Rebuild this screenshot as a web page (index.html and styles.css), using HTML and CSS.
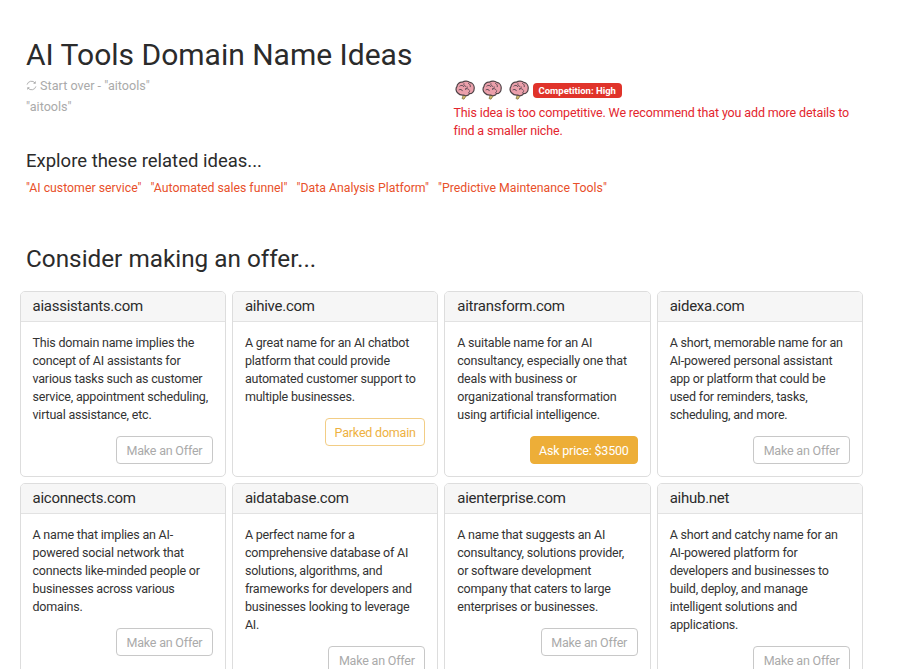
FILE: index.html
```html
<!DOCTYPE html>
<html lang="en">
<head>
<meta charset="UTF-8">
<meta name="viewport" content="width=device-width, initial-scale=1.0">
<title>AI Tools Domain Name Ideas</title>
<link rel="stylesheet" href="styles.css">
</head>
<body>

<svg class="defs" width="0" height="0" aria-hidden="true">
    <symbol id="brain" viewBox="0 0 20 20">
        <path d="M8.500 14.500L7 18.500l2 .7 3-4.700z" fill="#d3bb6c" stroke="#857544" stroke-width=".8"/>
        <path d="M2.800 13C.7 11.300.6 8.300 1.900 6.700 2.100 3.700 4.800 1.900 7.300 2.200 9.500.7 13 .8 14.800 2.400 17.600 3 19.500 5.600 19.200 8.500 19.200 11.700 17 13.800 14.500 13.700 13.300 15.800 10.400 16.300 8.800 15.100 6.700 15.400 4.300 14.800 2.800 13z" fill="#eba0ab" stroke="#4f4347" stroke-width="1.200"/>
        <path d="M4.500 6.300c1.600-1.600 3.800-1 4.300.6M9 3.300c-.6 1.600.5 3.200 2.200 3.100M13.200 3.300c1.500.6 2.600 2.200 2 3.800M3.700 10c1.600-1.100 3.300-.6 3.800 1.100M10 9.200c1.600-1 3.700-.5 4.200 1.100M12.300 6.600c0 1.600-1 2.600-2.300 2.600M14.700 10.500c0 1.100-.6 2.200-1.700 2.700" fill="none" stroke="#65505a" stroke-width="1"/>
    </symbol>
</svg>

<div id="page">
    <h1>AI Tools Domain Name Ideas</h1>

    <div class="intro">
        <div class="intro-left">
            <a class="muted" href="#">
                <svg class="refresh" viewBox="0 0 12 12" width="11" height="11">
                    <path d="M1.200 5A4.900 4.900 0 0 1 9.800 3.200M10.800 7A4.900 4.900 0 0 1 2.200 8.800" fill="none" stroke="#aaa" stroke-width="1"/>
                    <path d="M10.600 1v3H7.800zM1.400 11V8h2.800z" fill="#aaa"/>
                </svg>
                Start over - "aitools"
            </a>
            <p class="muted keyword">"aitools"</p>
        </div>
        <div class="intro-right">
            <div class="competition">
                <svg class="brain"><use href="#brain"/></svg>
                <svg class="brain"><use href="#brain"/></svg>
                <svg class="brain"><use href="#brain"/></svg>
                <span class="badge">Competition: High</span>
            </div>
            <p class="warning">This idea is too competitive. We recommend that you add more details to find a smaller niche.</p>
        </div>
    </div>

    <h3>Explore these related ideas...</h3>
    <div class="related">
        <a href="#">"AI customer service"</a>
        <a href="#">"Automated sales funnel"</a>
        <a href="#">"Data Analysis Platform"</a>
        <a href="#">"Predictive Maintenance Tools"</a>
    </div>

    <h2>Consider making an offer...</h2>

    <div class="cards">
        <div class="card">
            <div class="card-header">aiassistants.com</div>
            <div class="card-body">
                <p>This domain name implies the concept of AI assistants for various tasks such as customer service, appointment scheduling, virtual assistance, etc.</p>
                <a class="btn btn-offer" href="#">Make an Offer</a>
            </div>
        </div>
        <div class="card">
            <div class="card-header">aihive.com</div>
            <div class="card-body">
                <p>A great name for an AI chatbot platform that could provide automated customer support to multiple businesses.</p>
                <a class="btn btn-parked" href="#">Parked domain</a>
            </div>
        </div>
        <div class="card">
            <div class="card-header">aitransform.com</div>
            <div class="card-body">
                <p>A suitable name for an AI consultancy, especially one that deals with business or organizational transformation using artificial intelligence.</p>
                <a class="btn btn-price" href="#">Ask price: $3500</a>
            </div>
        </div>
        <div class="card">
            <div class="card-header">aidexa.com</div>
            <div class="card-body">
                <p>A short, memorable name for an AI-powered personal assistant app or platform that could be used for reminders, tasks, scheduling, and more.</p>
                <a class="btn btn-offer" href="#">Make an Offer</a>
            </div>
        </div>
        <div class="card">
            <div class="card-header">aiconnects.com</div>
            <div class="card-body">
                <p>A name that implies an AI-powered social network that connects like-minded people or businesses across various domains.</p>
                <a class="btn btn-offer" href="#">Make an Offer</a>
            </div>
        </div>
        <div class="card">
            <div class="card-header">aidatabase.com</div>
            <div class="card-body">
                <p>A perfect name for a comprehensive database of AI solutions, algorithms, and frameworks for developers and businesses looking to leverage AI.</p>
                <a class="btn btn-offer" href="#">Make an Offer</a>
            </div>
        </div>
        <div class="card">
            <div class="card-header">aienterprise.com</div>
            <div class="card-body">
                <p>A name that suggests an AI consultancy, solutions provider, or software development company that caters to large enterprises or businesses.</p>
                <a class="btn btn-offer" href="#">Make an Offer</a>
            </div>
        </div>
        <div class="card">
            <div class="card-header">aihub.net</div>
            <div class="card-body">
                <p>A short and catchy name for an AI-powered platform for developers and businesses to build, deploy, and manage intelligent solutions and applications.</p>
                <a class="btn btn-offer" href="#">Make an Offer</a>
            </div>
        </div>
    </div>
</div>

</body>
</html>
```

FILE: styles.css
```css
html, body {
    height: 100%;
    overflow: hidden;
}
body {
    font-family: Roboto, 'Noto Sans', sans-serif;
    background-color: #ffffff;
    color: #333333;
    margin: 0;
    padding: 0;
    font-size: 12.5px;
    letter-spacing: -0.2px;
    line-height: 18px;
}
a {
    text-decoration: none;
}
p {
    margin: 0;
}
.defs {
    position: absolute;
}
#page {
    width: 843.5px;
    padding: 36px 0 0 19.5px;
}
h1, h2, h3 {
    font-weight: 400;
    color: #2b2b2b;
    letter-spacing: 0;
    margin: 0;
    padding: 0 6.5px;
}
h1 {
    font-size: 30px;
    line-height: 38px;
}
h2 {
    font-size: 24.3px;
    line-height: 30px;
    margin-bottom: 17px;
}
h3 {
    font-size: 18.5px;
    line-height: 24px;
}
.intro {
    display: grid;
    grid-template-columns: 427.5px 1fr;
    padding-left: 6.5px;
    margin-top: 3px;
    height: 72px;
}
.muted {
    color: #aaaaaa;
    font-size: 12.6px;
    letter-spacing: 0;
}
.refresh {
    vertical-align: -1px;
}
.keyword {
    margin-top: 3px;
}
.intro-right {
    padding-right: 6px;
}
.competition {
    display: flex;
    align-items: center;
    height: 18px;
    padding: 4px 0 0 1px;
    margin-bottom: 5px;
}
.brain {
    width: 20px;
    height: 20px;
    margin-right: 7px;
}
.brain:nth-child(3) {
    margin-right: 4px;
}
.badge {
    background-color: #e0332a;
    color: #ffffff;
    font-size: 9.5px;
    font-weight: 700;
    letter-spacing: 0;
    line-height: 15px;
    padding: 0 6px;
    border-radius: 4px;
}
.warning {
    color: #e3262e;
    letter-spacing: -0.13px;
}
.related {
    display: flex;
    gap: 9px;
    padding: 6px 6.5px 0;
    margin-bottom: 47px;
    font-size: 12.3px;
    letter-spacing: 0;
}
.related a {
    color: #e8502a;
}
.cards {
    display: grid;
    grid-template-columns: repeat(4, 1fr);
    gap: 6px;
}
.card {
    border: 1px solid #dddddd;
    border-radius: 5px;
    overflow: hidden;
}
.card-header {
    background-color: #f6f6f6;
    border-bottom: 1px solid #e2e2e2;
    color: #2b2b2b;
    font-size: 15px;
    letter-spacing: -0.25px;
    line-height: 29px;
    padding: 0 12px;
}
.card-body {
    display: flow-root;
    padding: 12px;
}
.btn {
    float: right;
    box-sizing: border-box;
    height: 28px;
    line-height: 27px;
    margin-top: 12px;
    padding: 0 9.5px;
    border: 1px solid;
    border-radius: 4px;
}
.btn-offer {
    color: #aaaaaa;
    border-color: #c8c8c8;
}
.btn-parked {
    color: #eeb13f;
    border-color: #f2cd85;
    padding: 0 8.5px;
}
.btn-price {
    background-color: #edae38;
    border-color: #edae38;
    color: #ffffff;
    padding: 0 8px;
}
```
